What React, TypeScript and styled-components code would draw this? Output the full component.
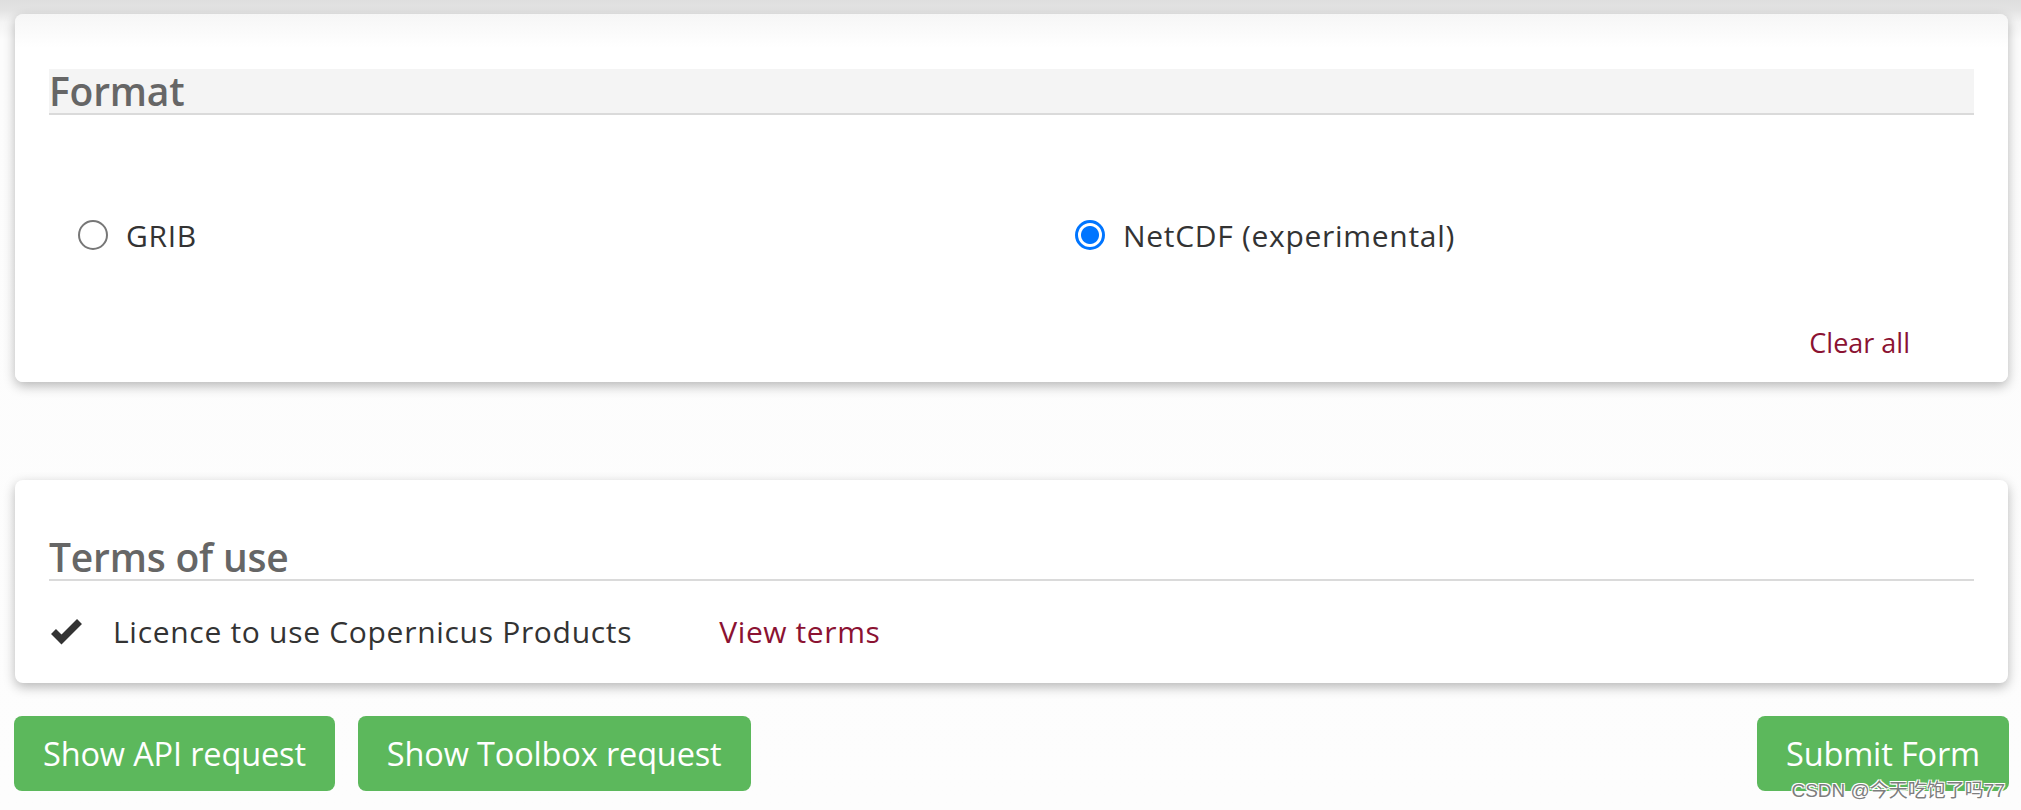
import React from "react";
import styled, { createGlobalStyle } from "styled-components";

const GlobalStyle = createGlobalStyle`
  html, body {
    margin: 0;
    padding: 0;
    background: #fdfdfd;
  }
  body {
    font-family: "Open Sans", "Noto Sans", "Liberation Sans", sans-serif;
    color: #333;
  }
`;

const Page = styled.div`
  position: relative;
  box-sizing: border-box;
  width: 2021px;
  height: 810px;
  overflow: hidden;
  padding: 14px 13px 0 15px;
  background: linear-gradient(
    to bottom,
    #dedede 0px,
    #e3e3e3 10px,
    #f4f4f4 22px,
    #fcfcfc 40px,
    #fdfdfd 100%
  );
`;

const Card = styled.section<{ $fade?: boolean; $pb: number }>`
  box-sizing: border-box;
  background: ${(p) =>
    p.$fade ? "linear-gradient(to bottom, #f6f6f6 0px, #fff 34px)" : "#fff"};
  border-radius: 8px;
  box-shadow: 0 4px 12px rgba(0, 0, 0, 0.28);
  padding: 55px 34px ${(p) => p.$pb}px 34px;
`;

const Heading = styled.h2<{ $shaded?: boolean }>`
  margin: 0;
  font-family: "Open Sans", "Noto Sans", sans-serif;
  font-weight: 600;
  font-size: 39px;
  line-height: 44px;
  letter-spacing: -0.2px;
  color: #666;
  background: ${(p) => (p.$shaded ? "#f4f4f4" : "transparent")};
  border-bottom: 2px solid #dadada;
`;

const OptionsRow = styled.div`
  display: grid;
  grid-template-columns: 997px 1fr;
  padding-left: 29px;
  margin-top: 100px;
`;

const Option = styled.label`
  display: flex;
  align-items: center;
  gap: 18px;
  height: 40px;
  font-size: 30px;
  letter-spacing: 0.7px;
  color: #333;
  cursor: pointer;
`;

const Radio = styled.input.attrs({ type: "radio" })`
  appearance: none;
  box-sizing: border-box;
  width: 30px;
  height: 30px;
  margin: 0;
  border-radius: 50%;
  border: 2px solid #777;
  background: #fff;
  flex: none;
  &:checked {
    border: 3px solid #0075ff;
    background: radial-gradient(circle, #0075ff 0 8.5px, #fff 9.5px);
  }
`;

const ClearRow = styled.div`
  display: flex;
  justify-content: flex-end;
  padding-right: 64px;
  margin-top: 73px;
`;

const Link = styled.a`
  color: #8b1232;
  text-decoration: none;
  font-size: 27px;
  line-height: 30px;
  cursor: pointer;
`;

const Spacer = styled.div`
  height: 98px;
`;

const TermsRow = styled.div`
  display: flex;
  align-items: center;
  height: 40px;
  margin-top: 31px;
  padding-left: 1px;
`;

const CheckIcon = styled.svg`
  width: 33px;
  height: 26px;
  flex: none;
`;

const TermsText = styled.span`
  font-size: 30px;
  line-height: 40px;
  letter-spacing: 0.7px;
  color: #333;
  margin-left: 30px;
`;

const TermsLink = styled(Link)`
  font-size: 30px;
  line-height: 40px;
  letter-spacing: 0.6px;
  margin-left: 87px;
`;

const ButtonBar = styled.div`
  display: flex;
  align-items: center;
  gap: 23px;
  margin-top: 33px;
  margin-right: -1px;
  margin-left: -1px;
`;

const Button = styled.button<{ $push?: boolean }>`
  box-sizing: border-box;
  height: 75px;
  padding: 0 29px;
  border: none;
  border-radius: 8px;
  background: #5cb85c;
  color: #fff;
  font-family: "Open Sans", "Noto Sans", sans-serif;
  font-size: 32.5px;
  letter-spacing: -0.15px;
  cursor: pointer;
  margin-left: ${(p) => (p.$push ? "auto" : "0")};
`;

const Watermark = styled.div`
  position: absolute;
  right: 16px;
  bottom: 8px;
  font-family: "Liberation Sans", "Noto Sans CJK SC", sans-serif;
  font-size: 19px;
  line-height: 22px;
  color: #7d7d7d;
  text-shadow: 1px 1px 0 #fff, -1px -1px 0 #fff, 1px -1px 0 #fff,
    -1px 1px 0 #fff;
  pointer-events: none;
`;

export default function App() {
  const [format, setFormat] = React.useState("netcdf");
  return (
    <>
      <GlobalStyle />
      <Page>
        <Card $fade $pb={24}>
          <Heading $shaded>Format</Heading>
          <OptionsRow>
            <Option>
              <Radio
                name="format"
                checked={format === "grib"}
                onChange={() => setFormat("grib")}
              />
              GRIB
            </Option>
            <Option>
              <Radio
                name="format"
                checked={format === "netcdf"}
                onChange={() => setFormat("netcdf")}
              />
              NetCDF (experimental)
            </Option>
          </OptionsRow>
          <ClearRow>
            <Link onClick={() => setFormat("")}>Clear all</Link>
          </ClearRow>
        </Card>
        <Spacer />
        <Card $pb={31}>
          <Heading>Terms of use</Heading>
          <TermsRow>
            <CheckIcon viewBox="0 0 33 26">
              <path
                d="M3.5 12.5 L11.5 20.5 L29.5 2.5"
                fill="none"
                stroke="#333"
                strokeWidth="7"
                strokeLinejoin="miter"
                strokeLinecap="butt"
              />
            </CheckIcon>
            <TermsText>Licence to use Copernicus Products</TermsText>
            <TermsLink>View terms</TermsLink>
          </TermsRow>
        </Card>
        <ButtonBar>
          <Button>Show API request</Button>
          <Button>Show Toolbox request</Button>
          <Button $push>Submit Form</Button>
        </ButtonBar>
        <Watermark>CSDN @今天吃饱了吗77</Watermark>
      </Page>
    </>
  );
}
